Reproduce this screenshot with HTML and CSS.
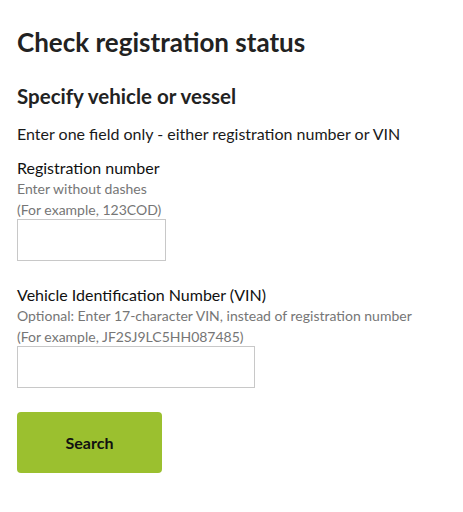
FILE: index.html
```
<!DOCTYPE html>
<html>
<head>
<meta charset="utf-8">
<link rel="stylesheet" href="styles.css">
</head>
<body>
<main class="page">
  <h1 class="title">Check registration status</h1>
  <h2 class="subtitle">Specify vehicle or vessel</h2>
  <p class="intro">Enter one field only - either registration number or VIN</p>
  <div class="field">
    <label class="label" for="reg">Registration number</label>
    <div class="hint">Enter without dashes</div>
    <div class="hint">(For example, 123COD)</div>
    <input class="input input-reg" id="reg" type="text">
  </div>
  <div class="field field-vin">
    <label class="label" for="vin">Vehicle Identification Number (VIN)</label>
    <div class="hint">Optional: Enter 17-character VIN, instead of registration number</div>
    <div class="hint">(For example, JF2SJ9LC5HH087485)</div>
    <input class="input input-vin" id="vin" type="text">
  </div>
  <button class="btn" type="button">Search</button>
</main>
</body>
</html>
```
FILE: styles.css
```
html, body {
  margin: 0;
  padding: 0;
  background: #fff;
}
.page {
  font-family: Lato, "Open Sans", sans-serif;
  color: #1a1a1a;
  padding: 26px 17px 20px 17px;
  display: flex;
  flex-direction: column;
  align-items: flex-start;
}
.title {
  font-size: 26px;
  font-weight: 700;
  line-height: 32px;
  margin: 0;
  color: #222;
}
.subtitle {
  font-size: 20.5px;
  font-weight: 700;
  line-height: 28px;
  margin: 24px 0 0 0;
  color: #222;
}
.intro {
  font-size: 16px;
  line-height: 20px;
  margin: 14px 0 0 0;
}
.field {
  display: flex;
  flex-direction: column;
  align-items: flex-start;
  margin-top: 14px;
}
.field-vin {
  margin-top: 24px;
}
.label {
  font-size: 16px;
  line-height: 20px;
  color: #111;
}
.hint {
  font-size: 14px;
  line-height: 21px;
  color: #767676;
}
.input {
  box-sizing: border-box;
  height: 42px;
  border: 1px solid #c8c8c8;
  border-radius: 0;
  margin: -1px 0 0 0;
  padding: 0 8px;
  background: #fff;
}
.input-reg { width: 149px; }
.input-vin { width: 238px; }
.btn {
  margin-top: 24px;
  width: 145px;
  height: 61px;
  background: #9bc02f;
  border: none;
  border-radius: 4px;
  font-family: Lato, sans-serif;
  font-size: 16px;
  font-weight: 700;
  color: #111;
}
```
